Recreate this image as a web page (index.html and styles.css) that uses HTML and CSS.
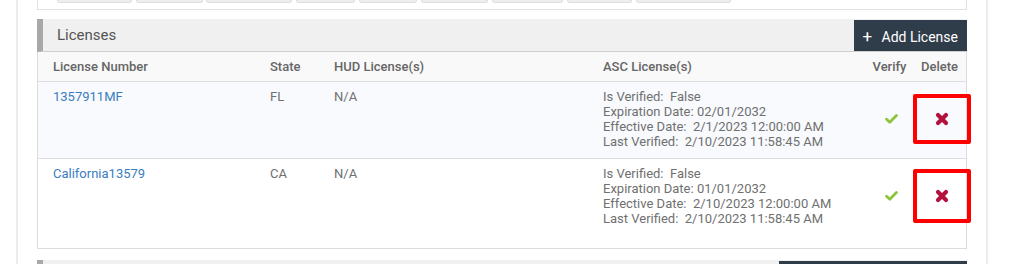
FILE: index.html
```html
<!DOCTYPE html>
<html lang="en">
<head>
    <meta charset="UTF-8">
    <meta name="viewport" content="width=device-width, initial-scale=1.0">
    <title>Licenses</title>
    <link rel="stylesheet" href="styles.css">
</head>
<body>
    <div class="page">
        <div class="tabs-panel">
            <div class="tabs">
                <span class="tab"></span>
                <span class="tab"></span>
                <span class="tab"></span>
                <span class="tab"></span>
                <span class="tab"></span>
                <span class="tab"></span>
                <span class="tab"></span>
                <span class="tab"></span>
                <span class="tab"></span>
            </div>
        </div>

        <div class="panel">
            <div class="panel-head">
                <h2 class="panel-title">Licenses</h2>
                <button type="button" class="add-btn"><span class="plus">+</span> Add License</button>
            </div>
            <div class="panel-body">
                <div class="row head-row">
                    <div class="cell">License Number</div>
                    <div class="cell">State</div>
                    <div class="cell">HUD License(s)</div>
                    <div class="cell">ASC License(s)</div>
                    <div class="cell center">Verify</div>
                    <div class="cell center">Delete</div>
                </div>

                <div class="row data-row shaded">
                    <div class="cell"><a href="#" class="lic-link">1357911MF</a></div>
                    <div class="cell">FL</div>
                    <div class="cell">N/A</div>
                    <div class="cell asc">
                        <div>Is Verified:&nbsp; False</div>
                        <div>Expiration Date: 02/01/2032</div>
                        <div>Effective Date:&nbsp; 2/1/2023 12:00:00 AM</div>
                        <div>Last Verified:&nbsp; 2/10/2023 11:58:45 AM</div>
                    </div>
                    <div class="cell center mid">
                        <svg class="check" width="13" height="10" viewBox="0 0 13 10"><polyline points="1.6,5.2 4.8,8.2 11.4,1.6" fill="none" stroke="#8cc43c" stroke-width="2.8" stroke-linecap="round" stroke-linejoin="round"/></svg>
                    </div>
                    <div class="cell center mid">
                        <div class="mark-box">
                            <svg width="14" height="14" viewBox="0 0 14 14"><path d="M3 3 L11 11 M11 3 L3 11" stroke="#b3123c" stroke-width="4.2" stroke-linecap="round"/></svg>
                        </div>
                    </div>
                </div>

                <div class="row data-row">
                    <div class="cell"><a href="#" class="lic-link">California13579</a></div>
                    <div class="cell">CA</div>
                    <div class="cell">N/A</div>
                    <div class="cell asc">
                        <div>Is Verified:&nbsp; False</div>
                        <div>Expiration Date: 01/01/2032</div>
                        <div>Effective Date:&nbsp; 2/10/2023 12:00:00 AM</div>
                        <div>Last Verified:&nbsp; 2/10/2023 11:58:45 AM</div>
                    </div>
                    <div class="cell center mid">
                        <svg class="check" width="13" height="10" viewBox="0 0 13 10"><polyline points="1.6,5.2 4.8,8.2 11.4,1.6" fill="none" stroke="#8cc43c" stroke-width="2.8" stroke-linecap="round" stroke-linejoin="round"/></svg>
                    </div>
                    <div class="cell center mid">
                        <div class="mark-box tall">
                            <svg width="14" height="14" viewBox="0 0 14 14"><path d="M3 3 L11 11 M11 3 L3 11" stroke="#b3123c" stroke-width="4.2" stroke-linecap="round"/></svg>
                        </div>
                    </div>
                </div>
            </div>
        </div>

        <div class="panel">
            <div class="panel-head">
                <h2 class="panel-title"></h2>
                <button type="button" class="add-btn wide"></button>
            </div>
        </div>
    </div>
</body>
</html>
```

FILE: styles.css
```css
body {
    margin: 0;
    font-family: Roboto, "Liberation Sans", Arial, sans-serif;
    font-size: 13px;
    color: #707070;
    background: #fff;
}
.page {
    margin-left: 16px;
    width: 930px;
    padding: 0 19px;
    border-left: 2px solid #ececec;
    border-right: 2px solid #ececec;
}
.tabs-panel {
    height: 9px;
    border: 1px solid #e2e2e2;
    border-top: none;
}
.tabs {
    display: flex;
    gap: 4px;
    padding-left: 19px;
}
.tab {
    height: 2px;
    background: #eeeeee;
    border: 1px solid #dedede;
    border-top: none;
    border-radius: 0 0 3px 3px;
}
.tab:nth-child(1) { width: 73px; }
.tab:nth-child(2) { width: 65px; }
.tab:nth-child(3) { width: 84px; margin-left: -1px; }
.tab:nth-child(4) { width: 57px; }
.tab:nth-child(5) { width: 56px; }
.tab:nth-child(6) { width: 65px; }
.tab:nth-child(7) { width: 69px; }
.tab:nth-child(8) { width: 63px; }
.tab:nth-child(9) { width: 93px; }
.panel {
    margin-top: 9px;
}
.panel + .panel {
    margin-top: 11px;
}
.panel-head {
    display: flex;
    align-items: stretch;
    height: 32px;
    background: #f0f0f0;
    border-left: 6px solid #a8a8a8;
    border-bottom: 1px solid #cfcfcf;
}
.panel-title {
    flex: 1;
    margin: 0;
    padding-left: 14px;
    font-size: 15px;
    font-weight: normal;
    line-height: 33px;
    color: #555;
}
.add-btn {
    margin-top: 1px;
    padding: 0 9px 0 8px;
    border: none;
    background: #2f3d4a;
    color: #fff;
    font-family: Roboto, "Liberation Sans", Arial, sans-serif;
    font-size: 14px;
    cursor: pointer;
}
.add-btn .plus {
    font-size: 17px;
    margin-right: 6px;
}
.add-btn.wide {
    width: 188px;
}
.panel-body {
    border: 1px solid #dcdcdc;
    border-top: none;
    padding-bottom: 20px;
}
.row {
    display: grid;
    grid-template-columns: 217px 64px 269px 278px 47px 53px;
}
.head-row {
    height: 29px;
    align-items: center;
    background: #f9f9f9;
    border-bottom: 1px solid #dedede;
    font-weight: 500;
    color: #666;
}
.cell {
    padding-left: 15px;
    line-height: 15px;
}
.cell.center {
    padding-left: 0;
    display: flex;
    justify-content: center;
}
.cell.mid {
    align-items: center;
}
.data-row {
    padding: 7px 0 9px;
}
.data-row.shaded {
    background: #f8fafd;
    border-bottom: 1px solid #dedede;
}
.data-row:last-child {
    padding-bottom: 2px;
}
.lic-link {
    color: #3a7dbf;
    text-decoration: none;
}
.check {
    display: block;
    margin-left: 3px;
}
.mark-box {
    flex: none;
    width: 50px;
    height: 42px;
    border: 4px solid #ff0000;
    border-radius: 2px;
    display: flex;
    align-items: center;
    justify-content: center;
    margin-right: -4px;
}
.mark-box.tall {
    height: 46px;
}
```
